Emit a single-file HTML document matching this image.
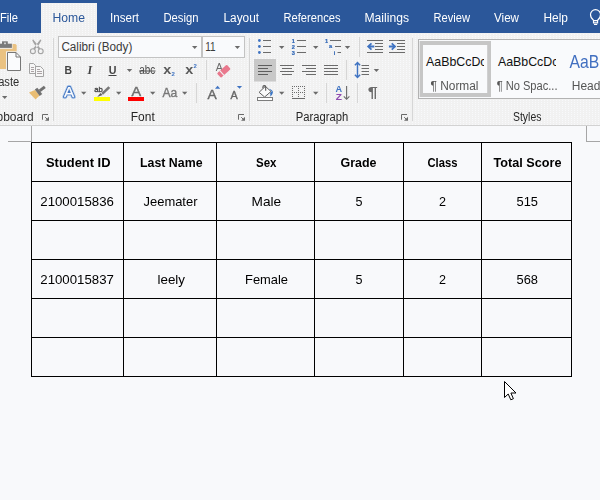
<!DOCTYPE html>
<html><head><meta charset="utf-8"><title>Word</title>
<style>
html,body{margin:0;padding:0;background:#f8f9fb;overflow:hidden}
svg{display:block}
text{font-family:"Liberation Sans",sans-serif}
.tab{font-size:12px;fill:#fff}
.lbl{font-size:11.5px;fill:#444}
.cell{font-size:13px;fill:#000}
.hd{font-size:13px;font-weight:bold;fill:#000}
</style></head><body>
<svg width="600" height="500" viewBox="0 0 600 500">
<filter id="gs" filterUnits="userSpaceOnUse" x="0" y="0" width="600" height="500" color-interpolation-filters="sRGB"><feOffset dx="0" dy="0"/></filter>
<g id="all" filter="url(#gs)">
<!-- backgrounds -->
<rect x="0" y="0" width="600" height="500" fill="#f8f9fb"/>
<rect x="0" y="0" width="600" height="33" fill="#2b579a"/>
<defs><pattern id="dz" x="0" y="33" width="3" height="2" patternUnits="userSpaceOnUse"><rect width="3" height="2" fill="#f1f1f1"/><rect x="1" y="1" width="1" height="1" fill="#f8f9fb"/></pattern></defs>
<rect x="0" y="33" width="600" height="92" fill="url(#dz)"/>
<rect x="0" y="125" width="600" height="1" fill="#d2d2d2"/>
<rect x="41" y="3" width="56" height="31" fill="url(#dz)"/>
<!-- tabs -->
<g class="tab">
<text x="0" y="22" textLength="18" lengthAdjust="spacingAndGlyphs">File</text>
<text x="52.5" y="22" textLength="32.5" lengthAdjust="spacingAndGlyphs" fill="#2b579a" style="fill:#2b579a">Home</text>
<text x="110" y="22" textLength="29" lengthAdjust="spacingAndGlyphs">Insert</text>
<text x="163.5" y="22" textLength="35" lengthAdjust="spacingAndGlyphs">Design</text>
<text x="223.5" y="22" textLength="35.5" lengthAdjust="spacingAndGlyphs">Layout</text>
<text x="283.5" y="22" textLength="57" lengthAdjust="spacingAndGlyphs">References</text>
<text x="364.5" y="22" textLength="44.5" lengthAdjust="spacingAndGlyphs">Mailings</text>
<text x="433.5" y="22" textLength="36.5" lengthAdjust="spacingAndGlyphs">Review</text>
<text x="494" y="22" textLength="25" lengthAdjust="spacingAndGlyphs">View</text>
<text x="543.5" y="22" textLength="24.5" lengthAdjust="spacingAndGlyphs">Help</text>
</g>
<!-- RIBBON -->
<g id="ribbon">
<!-- clipboard -->
<path d="M-2 44H15.2Q16.7 44 16.7 45.5V69H-2Z" fill="#eac282"/>
<rect x="-2" y="43.2" width="14.5" height="5.6" fill="#f1f1f1"/><path d="M-2 43.7H11.9V47.9H-2Z" fill="#7a7a7a"/><path d="M2 44V41.3H7.8V44Z" fill="#7a7a7a"/><rect x="4.2" y="42.6" width="1.6" height="1.6" fill="#e4e4e4"/>
<rect x="6" y="51.3" width="16" height="20.4" fill="#f1f1f1"/><path d="M7.5 52.5H16L20.5 57V70.5H7.5Z" fill="#fafbfd" stroke="#777" stroke-width="1"/><path d="M16 52.5V57H20.5" fill="none" stroke="#777" stroke-width="1"/>
<text x="-9.3" y="85.7" font-size="12" fill="#2e2e2e" textLength="28.5" lengthAdjust="spacingAndGlyphs">Paste</text>
<path d="M2 96h5.4l-2.7 3z" fill="#6b6b6b"/>
<g fill="none" stroke="#a3a3a3" stroke-width="1.15"><circle cx="32.9" cy="51.2" r="2.45"/><circle cx="40.7" cy="51.2" r="2.45"/></g><path d="M32.2 39.9L33.3 39.5L40.4 48.6L39 49.6Q33.8 44.6 32.2 39.9ZM41.4 39.9L40.3 39.5L33.2 48.6L34.6 49.6Q39.8 44.6 41.4 39.9Z" fill="#a3a3a3"/>
<g fill="#f6f6f6" stroke="#a3a3a3" stroke-width="1"><path d="M29.5 63.5H33.5L35.5 65.5V73.5H29.5Z"/><path d="M35.5 66.5H40.5L43.5 69.5V76.5H35.5Z"/></g>
<g fill="#aaa2a4"><rect x="31" y="67" width="3" height="1"/><rect x="31" y="69" width="3" height="1"/><rect x="31" y="71" width="3" height="1"/><rect x="37" y="69" width="3" height="1"/><rect x="37" y="71" width="5" height="1"/><rect x="37" y="73" width="5" height="1"/></g>
<path d="M29 92.5L35 89.9L39.6 95.6L35.5 99.5Z" fill="#e9bd73"/><g transform="translate(37.25 92.75) rotate(-38)" fill="#717171"><rect x="0" y="-4" width="3.2" height="8"/><rect x="3" y="-1.5" width="6.6" height="3"/></g>
<text x="-17.4" y="120.6" font-size="12" fill="#2e2e2e" textLength="51" lengthAdjust="spacingAndGlyphs">Clipboard</text>
<path d="M42.5 119.7V114.5H48" fill="none" stroke="#6a6a6a" stroke-width="1"/><path d="M49 116.8V120.8H45Z" fill="#6a6a6a"/><path d="M45.2 117.2L47.6 119.6" stroke="#6a6a6a" stroke-width="1" fill="none"/>
<rect x="53" y="38" width="1" height="83" fill="#d6d6d6"/>
<!-- font -->
<rect x="58.5" y="36.5" width="143" height="21" fill="#f9fafc" stroke="#c3c3c3"/>
<rect x="202.5" y="36.5" width="42" height="21" fill="#f9fafc" stroke="#c3c3c3"/>
<path d="M192 46h5.4l-2.7 3z" fill="#6b6b6b"/>
<path d="M234.7 46h5.4l-2.7 3z" fill="#6b6b6b"/>
<text x="64.5" y="73.5" font-size="11.5" font-weight="bold" fill="#444" textLength="7.5" lengthAdjust="spacingAndGlyphs">B</text>
<text x="87.5" y="73.5" font-size="12" style="font-family:'Liberation Serif',serif;font-style:italic;font-weight:bold" fill="#444">I</text>
<text x="108.7" y="73.5" font-size="11.5" font-weight="bold" fill="#444" textLength="7.7" lengthAdjust="spacingAndGlyphs">U</text><rect x="108.5" y="75" width="8" height="1" fill="#444"/>
<path d="M126.8 69h5.4l-2.7 3z" fill="#6b6b6b"/>
<text x="139.3" y="73.7" font-size="12" fill="#4a4a4a" textLength="16" lengthAdjust="spacingAndGlyphs">abc</text><rect x="139" y="70.5" width="16.5" height="1" fill="#555"/>
<text x="163.3" y="73.7" font-size="12.5" font-weight="bold" fill="#5a5a5a" textLength="8" lengthAdjust="spacingAndGlyphs">x</text><text x="171.6" y="76.3" font-size="6" font-weight="bold" fill="#3f73c2">2</text>
<text x="185.3" y="73.7" font-size="12.5" font-weight="bold" fill="#5a5a5a" textLength="8" lengthAdjust="spacingAndGlyphs">x</text><text x="193.6" y="68.3" font-size="6" font-weight="bold" fill="#3f73c2">2</text>
<rect x="206" y="60" width="1" height="20" fill="#d6d6d6"/>
<text x="215.8" y="71" font-size="10.5" fill="#6b6b6b" textLength="7" lengthAdjust="spacingAndGlyphs">A</text>
<g transform="rotate(-42 223.8 71.2)"><rect x="217.2" y="68.2" width="13.2" height="6" rx="1" fill="#e9788d"/><rect x="220.6" y="68" width="1.1" height="6.4" fill="#f1f1f1"/></g>
<text x="63.9" y="97.2" font-size="15.4" fill="#fdfdfe" stroke="#c2d6f0" stroke-width="3.8" stroke-linejoin="round" textLength="10.2" lengthAdjust="spacingAndGlyphs">A</text>
<text x="63.9" y="97.2" font-size="15.4" fill="#fdfdfe" stroke="#4477c2" stroke-width="2.3" stroke-linejoin="round" textLength="10.2" lengthAdjust="spacingAndGlyphs">A</text>
<text x="63.9" y="97.2" font-size="15.4" fill="#fdfdfe" stroke="#fdfdfe" stroke-width="0.25" textLength="10.2" lengthAdjust="spacingAndGlyphs">A</text>
<path d="M81 91.7h5.4l-2.7 3z" fill="#6b6b6b"/>
<text x="94.2" y="91.8" font-size="7.8" fill="#484848" stroke="#484848" stroke-width="0.35" textLength="8.6" lengthAdjust="spacingAndGlyphs">ab</text>
<path d="M102.2 93.9L109.3 87.1" stroke="#797979" stroke-width="2.7" fill="none"/><path d="M97.2 96.9L100.4 92.9L102.5 95Z" fill="#5c5c5c"/>
<rect x="94" y="97" width="16" height="4" fill="#ffff00"/>
<path d="M116 91.7h5.4l-2.7 3z" fill="#6b6b6b"/>
<text x="131.6" y="96.4" font-size="13" fill="#6e6e6e" stroke="#6e6e6e" stroke-width="0.45" textLength="9.6" lengthAdjust="spacingAndGlyphs">A</text>
<rect x="128" y="97" width="16" height="4" fill="#ff0000"/>
<path d="M150 91.7h5.4l-2.7 3z" fill="#6b6b6b"/>
<text x="162.4" y="96.7" font-size="12" fill="#777" stroke="#777" stroke-width="0.35" textLength="14.8" lengthAdjust="spacingAndGlyphs">Aa</text>
<path d="M182 91.7h5.4l-2.7 3z" fill="#6b6b6b"/>
<rect x="196" y="83" width="1" height="20" fill="#d6d6d6"/>
<text x="207.4" y="99" font-size="13.5" fill="#666" stroke="#666" stroke-width="0.4" textLength="9.2" lengthAdjust="spacingAndGlyphs">A</text><path d="M215 88.7L217.6 85.8L220.2 88.7Z" fill="#3f73c2"/>
<text x="230.5" y="99" font-size="11.5" fill="#666" stroke="#666" stroke-width="0.4" textLength="7.2" lengthAdjust="spacingAndGlyphs">A</text><path d="M236.9 85.9H242.1L239.5 88.8Z" fill="#3f73c2"/>
<text x="130.8" y="120.7" font-size="12" fill="#262626" textLength="23.9" lengthAdjust="spacingAndGlyphs">Font</text>
<path d="M238.5 119.7V114.5H244" fill="none" stroke="#6a6a6a" stroke-width="1"/><path d="M245 116.8V120.8H241Z" fill="#6a6a6a"/><path d="M241.2 117.2L243.6 119.6" stroke="#6a6a6a" stroke-width="1" fill="none"/>
<rect x="249" y="38" width="1" height="83" fill="#d6d6d6"/>
<!-- paragraph -->
<circle cx="259.4" cy="40.5" r="1.4" fill="#3f73c2"/>
<circle cx="259.4" cy="46.5" r="1.4" fill="#3f73c2"/>
<circle cx="259.4" cy="52.5" r="1.4" fill="#3f73c2"/>
<rect x="263" y="40.0" width="8" height="1" fill="#6b6b6b"/><rect x="263" y="46.0" width="8" height="1" fill="#6b6b6b"/><rect x="263" y="52.0" width="8" height="1" fill="#6b6b6b"/>
<path d="M279 46h5.4l-2.7 3z" fill="#6b6b6b"/>
<g font-size="5.6" font-weight="bold" fill="#2f66b6" stroke="#2f66b6" stroke-width="0.2"><text x="291.8" y="42.9">1</text><text x="291.8" y="48.9">2</text><text x="291.8" y="54.9">3</text></g>
<rect x="297" y="40.0" width="9" height="1" fill="#6b6b6b"/><rect x="297" y="46.0" width="9" height="1" fill="#6b6b6b"/><rect x="297" y="52.0" width="9" height="1" fill="#6b6b6b"/>
<path d="M313 46h5.4l-2.7 3z" fill="#6b6b6b"/>
<g font-size="5.6" font-weight="bold" fill="#2f66b6" stroke="#2f66b6" stroke-width="0.2"><text x="325" y="42.9">1</text><text x="329" y="47.9">a</text><text x="333.8" y="54.8">i</text></g>
<rect x="330" y="40.0" width="11" height="1" fill="#6b6b6b"/><rect x="335" y="46.0" width="6" height="1" fill="#6b6b6b"/><rect x="337.5" y="52.0" width="3.5" height="1" fill="#6b6b6b"/>
<path d="M344.8 46h5.4l-2.7 3z" fill="#6b6b6b"/>
<rect x="359" y="37" width="1" height="20" fill="#d6d6d6"/>
<rect x="367" y="40.0" width="16" height="1" fill="#6b6b6b"/><rect x="375" y="43.0" width="8" height="1" fill="#6b6b6b"/><rect x="375" y="46.0" width="8" height="1" fill="#6b6b6b"/><rect x="375" y="49.0" width="8" height="1" fill="#6b6b6b"/><rect x="367" y="52.0" width="16" height="1" fill="#6b6b6b"/>
<path d="M366.9 46.5L370.9 42.7L372.1 43.9L370.4 45.6H374.3V47.4H370.4L372.1 49.1L370.9 50.3Z" fill="#3f73c2"/>
<rect x="389" y="40.0" width="16" height="1" fill="#6b6b6b"/><rect x="397" y="43.0" width="8" height="1" fill="#6b6b6b"/><rect x="397" y="46.0" width="8" height="1" fill="#6b6b6b"/><rect x="397" y="49.0" width="8" height="1" fill="#6b6b6b"/><rect x="389" y="52.0" width="16" height="1" fill="#6b6b6b"/>
<path d="M396.3 46.5L392.3 42.7L391.1 43.9L392.8 45.6H388.9V47.4H392.8L391.1 49.1L392.3 50.3Z" fill="#3f73c2"/>
<rect x="254" y="59" width="22" height="22.5" fill="#c8c8c8"/>
<rect x="258" y="65.0" width="14" height="1" fill="#5e5e5e"/><rect x="258" y="68.0" width="10" height="1" fill="#5e5e5e"/><rect x="258" y="71.0" width="14" height="1" fill="#5e5e5e"/><rect x="258" y="74.0" width="10" height="1" fill="#5e5e5e"/>
<rect x="280" y="65.0" width="14" height="1" fill="#6b6b6b"/><rect x="282" y="68.0" width="10" height="1" fill="#6b6b6b"/><rect x="280" y="71.0" width="14" height="1" fill="#6b6b6b"/><rect x="282" y="74.0" width="10" height="1" fill="#6b6b6b"/>
<rect x="302" y="65.0" width="14" height="1" fill="#6b6b6b"/><rect x="306" y="68.0" width="10" height="1" fill="#6b6b6b"/><rect x="302" y="71.0" width="14" height="1" fill="#6b6b6b"/><rect x="306" y="74.0" width="10" height="1" fill="#6b6b6b"/>
<rect x="324" y="65.0" width="14" height="1" fill="#6b6b6b"/><rect x="324" y="68.0" width="14" height="1" fill="#6b6b6b"/><rect x="324" y="71.0" width="14" height="1" fill="#6b6b6b"/><rect x="324" y="74.0" width="14" height="1" fill="#6b6b6b"/>
<rect x="346" y="60" width="1" height="20" fill="#d6d6d6"/>
<path d="M357.5 62.8V77.2M354.9 65.3L357.5 62.6L360.1 65.3M354.9 74.7L357.5 77.4L360.1 74.7" fill="none" stroke="#3f73c2" stroke-width="1.45"/>
<rect x="361.5" y="65.0" width="7.5" height="1" fill="#6b6b6b"/><rect x="361.5" y="68.0" width="7.5" height="1" fill="#6b6b6b"/><rect x="361.5" y="71.0" width="7.5" height="1" fill="#6b6b6b"/><rect x="361.5" y="74.0" width="7.5" height="1" fill="#6b6b6b"/>
<path d="M373.7 69h5.4l-2.7 3z" fill="#6b6b6b"/>
<path d="M265.4 86.3L271 91.5L264.6 97L259.1 92.3Z" fill="#fafafa" stroke="#5f5f5f" stroke-width="1"/>
<path d="M262.9 88.3V87a1.4 1.4 0 0 1 2.8 0V90.8" fill="none" stroke="#555" stroke-width="1.1"/>
<path d="M269 88.8Q273.3 90.2 272.9 92.7Q272.3 95.2 270.2 96.5Q270.7 94.4 270 93.1L271.7 91.5Z" fill="#3a75c4"/>
<rect x="257.5" y="97.5" width="15" height="3" fill="#fdfdfd" stroke="#7d7d7d" stroke-width="1"/>
<path d="M279 91.7h5.4l-2.7 3z" fill="#6b6b6b"/>
<g stroke="#6b6b6b" stroke-width="1" stroke-dasharray="1 1" fill="none"><path d="M292 86.5H305.5M292.5 86V98M304.5 86V98M298.5 86V98M292 92.5H305.5"/></g><rect x="292" y="98" width="13" height="1" fill="#6b6b6b"/>
<path d="M313 91.7h5.4l-2.7 3z" fill="#6b6b6b"/>
<rect x="326" y="83" width="1" height="20" fill="#d6d6d6"/>
<text x="335.6" y="91.8" font-size="8.5" font-weight="bold" fill="#3f73c2" textLength="6.6" lengthAdjust="spacingAndGlyphs">A</text>
<text x="335.8" y="99.8" font-size="8.5" font-weight="bold" fill="#8f4ab0" textLength="6.2" lengthAdjust="spacingAndGlyphs">Z</text>
<path d="M346.6 86V99M343.8 96.3L346.6 99.3L349.4 96.3" fill="none" stroke="#6b6b6b" stroke-width="1.1"/>
<rect x="357" y="83" width="1" height="20" fill="#d6d6d6"/>
<text x="367.8" y="97" font-size="14" font-weight="bold" fill="#6b6b6b" textLength="10" lengthAdjust="spacingAndGlyphs">¶</text>
<text x="295.8" y="120.7" font-size="12" fill="#262626" textLength="52.5" lengthAdjust="spacingAndGlyphs">Paragraph</text>
<path d="M401.5 119.7V114.5H407" fill="none" stroke="#6a6a6a" stroke-width="1"/><path d="M408 116.8V120.8H404Z" fill="#6a6a6a"/><path d="M404.2 117.2L406.6 119.6" stroke="#6a6a6a" stroke-width="1" fill="none"/>
<rect x="412" y="38" width="1" height="83" fill="#d6d6d6"/>
<!-- styles -->
<rect x="418.5" y="39.5" width="190" height="59" fill="#f9fafc" stroke="#b2b2b2"/>
<path d="M419.6 40.9H491V97.1H419.6ZM423 45V93H487.2V45Z" fill="#c6c6c6" fill-rule="evenodd"/>
<clipPath id="c1"><rect x="423" y="44" width="60.9" height="48"/></clipPath><clipPath id="c2"><rect x="493" y="44" width="63.1" height="48"/></clipPath>
<text x="430.5" y="89.7" font-size="12" fill="#555" textLength="48" lengthAdjust="spacingAndGlyphs">¶ Normal</text>
<text x="496.7" y="89.7" font-size="12" fill="#555" textLength="60.8" lengthAdjust="spacingAndGlyphs">¶ No Spac...</text>
<text x="569.6" y="67.8" font-size="18.5" fill="#416fc0" textLength="69" lengthAdjust="spacingAndGlyphs">AaBbCcD</text>
<text x="571.8" y="89.7" font-size="12" fill="#555" textLength="54.5" lengthAdjust="spacingAndGlyphs">Heading 1</text>
<text x="513" y="120.8" font-size="12" fill="#262626" textLength="28.4" lengthAdjust="spacingAndGlyphs">Styles</text>
<path d="M593.5 22.8V20.3Q590.5 18 590.5 14.6A5 5 0 0 1 600.5 14.6Q600.5 18 597.6 20.3V22.8Z M593.5 20.6H597.6" fill="none" stroke="#fff" stroke-width="1.15"/><rect x="594" y="24" width="3.2" height="1" fill="#fff"/>
</g>
<!-- DOC -->
<g id="doc">
<!-- margin markers -->
<rect x="31" y="126" width="1" height="16" fill="#a6a6a6"/>
<rect x="8" y="141" width="24" height="1" fill="#a6a6a6"/>
<rect x="586" y="126" width="1" height="16" fill="#a6a6a6"/>
<rect x="586" y="141" width="14" height="1" fill="#a6a6a6"/>
<!-- table grid -->
<g fill="#000">
<rect x="31" y="142" width="541" height="1"/>
<rect x="31" y="181" width="541" height="1"/>
<rect x="31" y="220" width="541" height="1"/>
<rect x="31" y="259" width="541" height="1"/>
<rect x="31" y="298" width="541" height="1"/>
<rect x="31" y="337" width="541" height="1"/>
<rect x="31" y="376" width="541" height="1"/>
<rect x="31" y="142" width="1" height="235"/>
<rect x="123" y="142" width="1" height="235"/>
<rect x="216" y="142" width="1" height="235"/>
<rect x="314" y="142" width="1" height="235"/>
<rect x="403" y="142" width="1" height="235"/>
<rect x="481" y="142" width="1" height="235"/>
<rect x="571" y="142" width="1" height="235"/>
</g>
<g class="hd">
<text x="46" y="167" textLength="64.5" lengthAdjust="spacingAndGlyphs">Student ID</text>
<text x="140" y="167" textLength="62.5" lengthAdjust="spacingAndGlyphs">Last Name</text>
<text x="256" y="167" textLength="20.5" lengthAdjust="spacingAndGlyphs">Sex</text>
<text x="340.5" y="167" textLength="36" lengthAdjust="spacingAndGlyphs">Grade</text>
<text x="427.5" y="167" textLength="30" lengthAdjust="spacingAndGlyphs">Class</text>
<text x="493.5" y="167" textLength="68" lengthAdjust="spacingAndGlyphs">Total Score</text>
</g>
<g class="cell">
<text x="40.3" y="206" textLength="73.6" lengthAdjust="spacingAndGlyphs">2100015836</text>
<text x="143.5" y="206" textLength="54" lengthAdjust="spacingAndGlyphs">Jeemater</text>
<text x="251.6" y="206" textLength="29.6" lengthAdjust="spacingAndGlyphs">Male</text>
<text x="355.5" y="206" textLength="7" lengthAdjust="spacingAndGlyphs">5</text>
<text x="439" y="206" textLength="7" lengthAdjust="spacingAndGlyphs">2</text>
<text x="516.5" y="206" textLength="21.5" lengthAdjust="spacingAndGlyphs">515</text>
<text x="40.3" y="284" textLength="73.6" lengthAdjust="spacingAndGlyphs">2100015837</text>
<text x="157.5" y="284" textLength="27.5" lengthAdjust="spacingAndGlyphs">leely</text>
<text x="245" y="284" textLength="43" lengthAdjust="spacingAndGlyphs">Female</text>
<text x="355.5" y="284" textLength="7" lengthAdjust="spacingAndGlyphs">5</text>
<text x="439" y="284" textLength="7" lengthAdjust="spacingAndGlyphs">2</text>
<text x="516.5" y="284" textLength="21.5" lengthAdjust="spacingAndGlyphs">568</text>
</g>
<!-- mouse cursor -->
<path d="M504.5 381.5 L504.5 397.5 L508.2 394 L510.8 399.8 L513.4 398.7 L510.9 393 L516 393 Z" fill="#fff" stroke="#000" stroke-width="1" stroke-linejoin="miter"/>
</g>
</g>
<!-- cleartype-ish texts -->
<text x="61.4" y="51.4" font-size="12" fill="#3b3b3b" textLength="71" lengthAdjust="spacingAndGlyphs">Calibri (Body)</text>
<text x="205.2" y="51.4" font-size="12" fill="#3b3b3b" textLength="10.4" lengthAdjust="spacingAndGlyphs">11</text>
<text clip-path="url(#c1)" x="426" y="65.7" font-size="12.6" fill="#111" textLength="60.5" lengthAdjust="spacingAndGlyphs">AaBbCcDc</text>
<text clip-path="url(#c2)" x="497.9" y="65.7" font-size="12.6" fill="#111" textLength="60.5" lengthAdjust="spacingAndGlyphs">AaBbCcDc</text>
</svg>
</body></html>
